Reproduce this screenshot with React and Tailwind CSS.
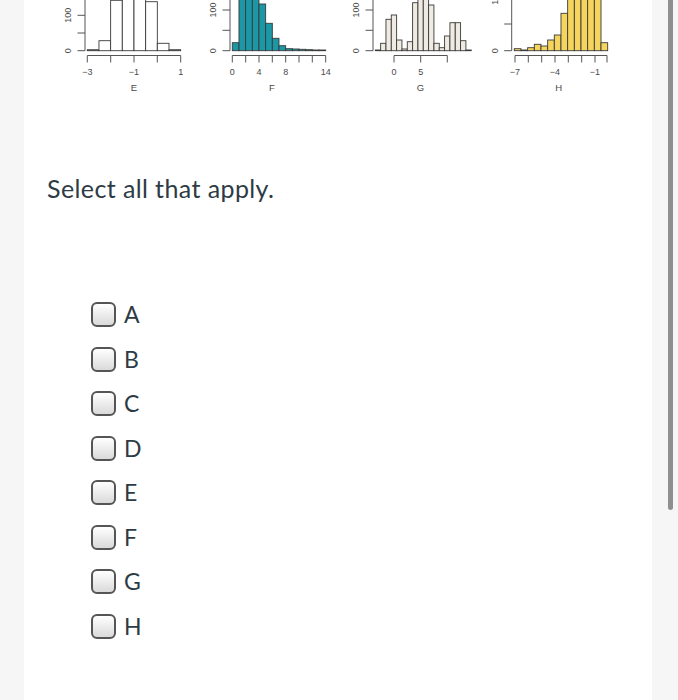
const BASE = 50.7

// bar tops in page px, measured off the reference
const HISTS = [
  { x0: 87.3, w: 11.67, fill: '#ffffff', tops: [49.7, 40.7, 0.3, -5, -5, 1.7, 43.3, 49.7] },
  { x0: 232.3, w: 6.67, fill: '#1b97a6', tops: [42.7, -5, -5, -5, 4, 23.3, 38.3, 45.7, 48.7, 49, 49.3, 49.7, 50, 50] },
  { x0: 375.3, w: 5.33, fill: '#efeae2', tops: [50, 43.3, 19.3, 15, 40, 49, 41.7, 2.7, -5, -5, 5, 43.3, 47.7, 36, 22.7, 22.7, 40.7, 50] },
  { x0: 514.3, w: 6.67, fill: '#f6d55e', tops: [48.7, 50, 47.7, 44.3, 46, 40, 35, 13.3, -5, -5, -5, -5, -5, 42.7] },
]

const AXES = [
  { ax: 85, yTicks: [50.7, 33, 15.3], top100: 15.3, xTicks: [87.3, 110.7, 134, 157.3, 180.7], xLabels: [[87.3, '−3'], [134, '−1'], [180.7, '1']], title: [134, 'E'] },
  { ax: 230, yTicks: [50.7, 30.3, 10], top100: 10, xTicks: [232.3, 245.7, 259, 272.3, 285.7, 299, 312.3, 325.7], xLabels: [[232.3, '0'], [259, '4'], [285.7, '8'], [325.7, '14']], title: [272, 'F'] },
  { ax: 373, yTicks: [50.7, 30.3, 10], top100: 10, xTicks: [394, 420.7, 447.3], xLabels: [[394, '0'], [420.7, '5']], title: [420.5, 'G'] },
  { ax: 511.7, yTicks: [50.7, 24, -2.7], top100: -2.7, xTicks: [515, 528.3, 541.7, 555, 568.3, 581.7, 595, 607], xLabels: [[515, '−7'], [555, '−4'], [595, '−1']], title: [558.8, 'H'] },
]

function Histograms() {
  return (
    <svg width="628" height="96" viewBox="24 0 628 96" className="block">
      <g fontFamily="'Liberation Sans', Arial, sans-serif" fontSize="9" fill="#4a4a4a">
        {HISTS.map((h, k) =>
          h.tops.map((t, i) => (
            <rect key={`${k}-${i}`} x={h.x0 + i * h.w} y={t} width={h.w} height={BASE - t}
              fill={h.fill} stroke="#3a3a3a" strokeWidth="0.9" />
          ))
        )}
        {AXES.map((a, k) => {
          const x1 = a.xTicks[0]
          const x2 = a.xTicks[a.xTicks.length - 1]
          const lx = a.ax - 14
          return (
            <g key={k}>
              {/* y axis */}
              <line x1={a.ax} y1={-2} x2={a.ax} y2={BASE} stroke="#555" strokeWidth="1" />
              {a.yTicks.map((y, i) => (
                <line key={i} x1={a.ax - 7.5} y1={y} x2={a.ax} y2={y} stroke="#555" strokeWidth="1" />
              ))}
              <text transform={`translate(${lx},${BASE}) rotate(-90)`} textAnchor="middle">0</text>
              <text transform={`translate(${lx},${a.top100}) rotate(-90)`} textAnchor="middle">100</text>
              {/* x axis */}
              <line x1={x1} y1={55.5} x2={x2} y2={55.5} stroke="#555" strokeWidth="1" />
              {a.xTicks.map((x, i) => (
                <line key={i} x1={x} y1={55.5} x2={x} y2={62.5} stroke="#555" strokeWidth="1" />
              ))}
              {a.xLabels.map(([x, t], i) => (
                <text key={i} x={x} y={75} textAnchor="middle">{t}</text>
              ))}
              <text x={a.title[0]} y={90.5} textAnchor="middle" fontSize="9.5">{a.title[1]}</text>
            </g>
          )
        })}
      </g>
    </svg>
  )
}

const OPTIONS = ['A', 'B', 'C', 'D', 'E', 'F', 'G', 'H']

export default function App() {
  return (
    <div className="flex min-h-[700px] w-full bg-[#f6f6f6] font-[Lato,sans-serif] text-[#2d3b45]">
      <div className="w-[24px] shrink-0" />

      <main className="w-[628px] shrink-0 bg-white">
        <Histograms />

        <p className="mt-[75.8px] pl-[23px] text-[25px] leading-[33px] tracking-[0.4px]">Select all that apply.</p>

        <ul className="mt-[87.7px] pl-[67px]">
          {OPTIONS.map((o) => (
            <li key={o} className="flex h-[44.5px] items-center gap-[8px]">
              <span className="h-[25px] w-[25px] rounded-[6px] border-2 border-[#555] bg-linear-to-b from-white to-[#dadada]" />
              <span className="text-[23px] leading-none">{o}</span>
            </li>
          ))}
        </ul>
      </main>

      <div className="flex-1 pl-[16px]">
        <div className="h-[510px] w-[5px] rounded-b-full bg-[#8f8f8f]" />
      </div>
    </div>
  )
}
